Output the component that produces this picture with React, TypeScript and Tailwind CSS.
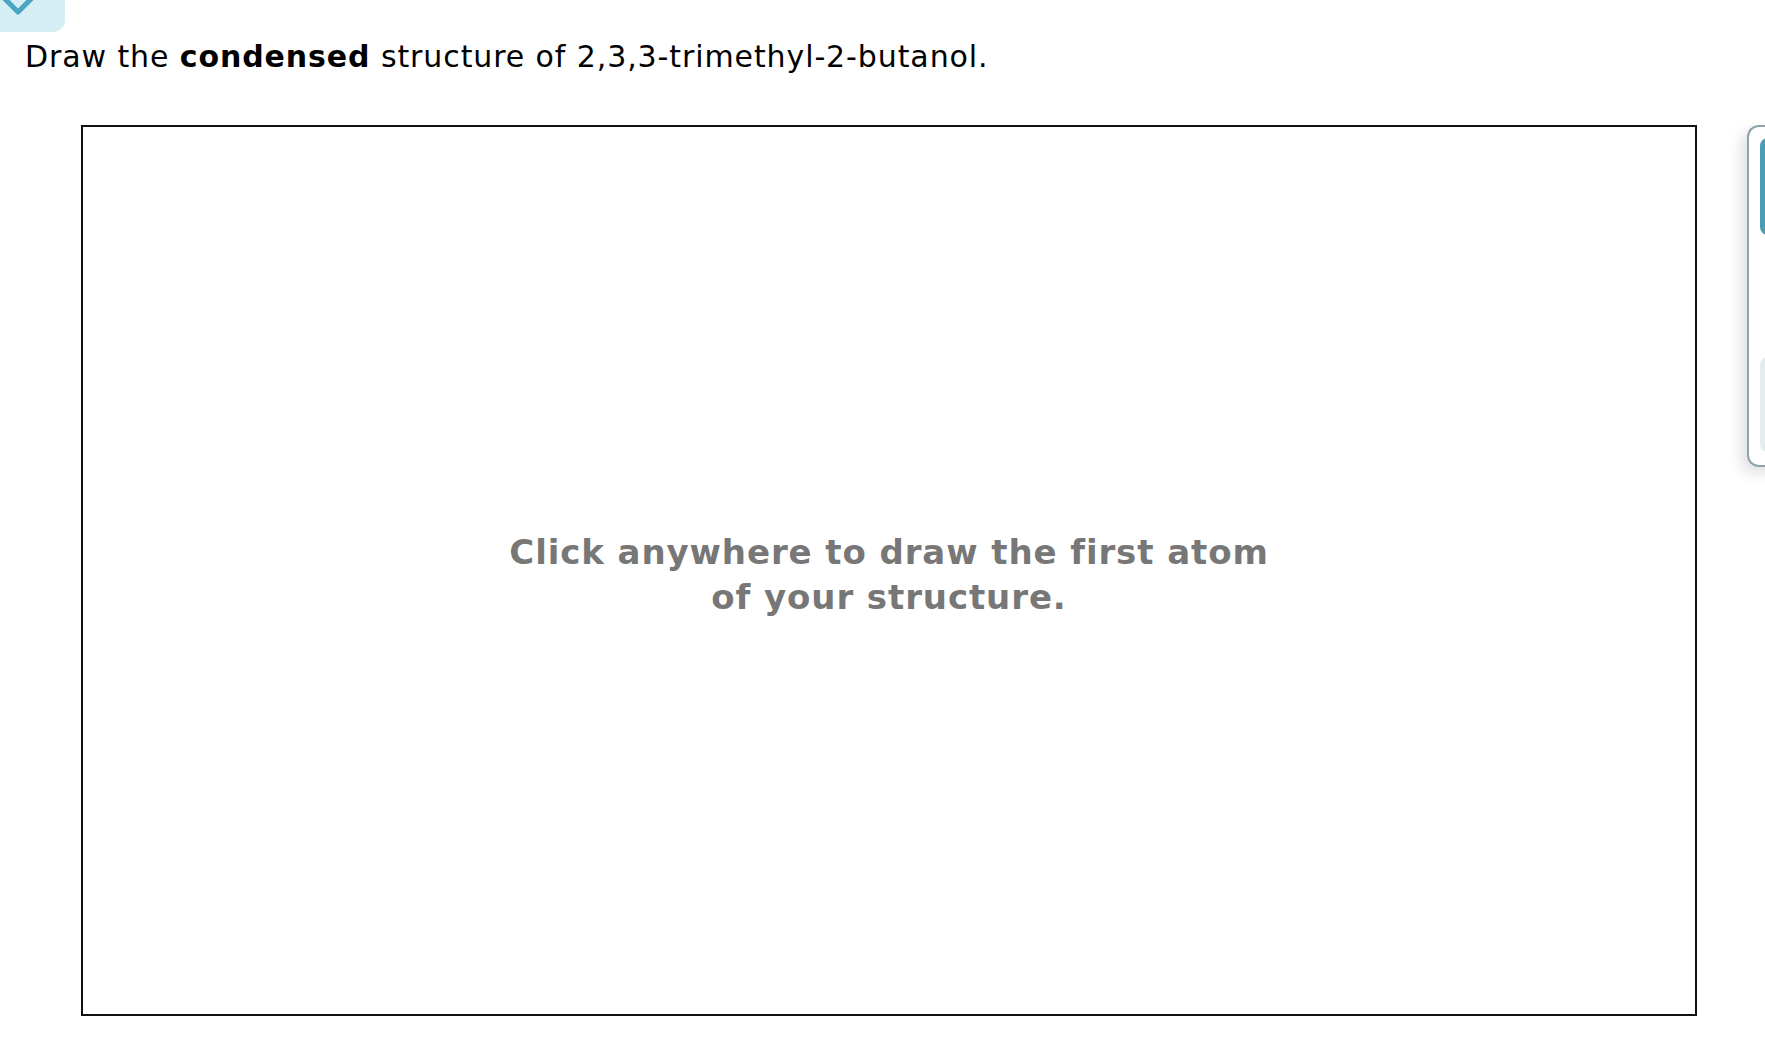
import React from "react";

export default function App() {
  return (
    <div className="relative w-full h-[1040px] overflow-hidden bg-white" style={{ fontFamily: '"DejaVu Sans", Verdana, sans-serif' }}>
      <div className="w-[65px] h-[32px] rounded-br-[12px] bg-[#d4eef4]">
        <svg width="65" height="32" viewBox="0 0 65 32">
          <polyline points="4,-2 18,12 32,-2" fill="none" stroke="#4aa5c2" strokeWidth="5" strokeLinecap="round" strokeLinejoin="round" />
        </svg>
      </div>
      <p className="mt-[7px] ml-[25px] text-[30px] leading-[36px] tracking-[0.9px] text-black" style={{ fontFamily: '"DejaVu Sans", Verdana, sans-serif' }}>
        Draw the <b className="font-bold">condensed</b> structure of 2,3,3-trimethyl-2-butanol.
      </p>
      <div className="mt-[50px] flex items-start">
        <div className="ml-[81px] w-[1616px] h-[891px] shrink-0 border-2 border-[#111] bg-white flex items-center justify-center">
          <div className="text-center text-[34px] leading-[45px] font-bold tracking-[0.9px] text-[#777777] mt-[8px]">
            Click anywhere to draw the first atom
            <br />
            of your structure.
          </div>
        </div>
        <div className="ml-[50px] w-[60px] h-[342px] shrink-0 rounded-l-[12px] border-2 border-r-0 border-[#8ea3ac] bg-white shadow-[-6px_6px_14px_rgba(0,0,0,0.12)] flex flex-col pl-[11px] pt-[11px]">
          <div className="h-[97px] w-full rounded-l-[8px] bg-[#4a9db4]" />
          <div className="mt-[122px] h-[95px] w-full rounded-l-[8px] bg-[#e6ebed]" />
        </div>
      </div>
    </div>
  );
}
